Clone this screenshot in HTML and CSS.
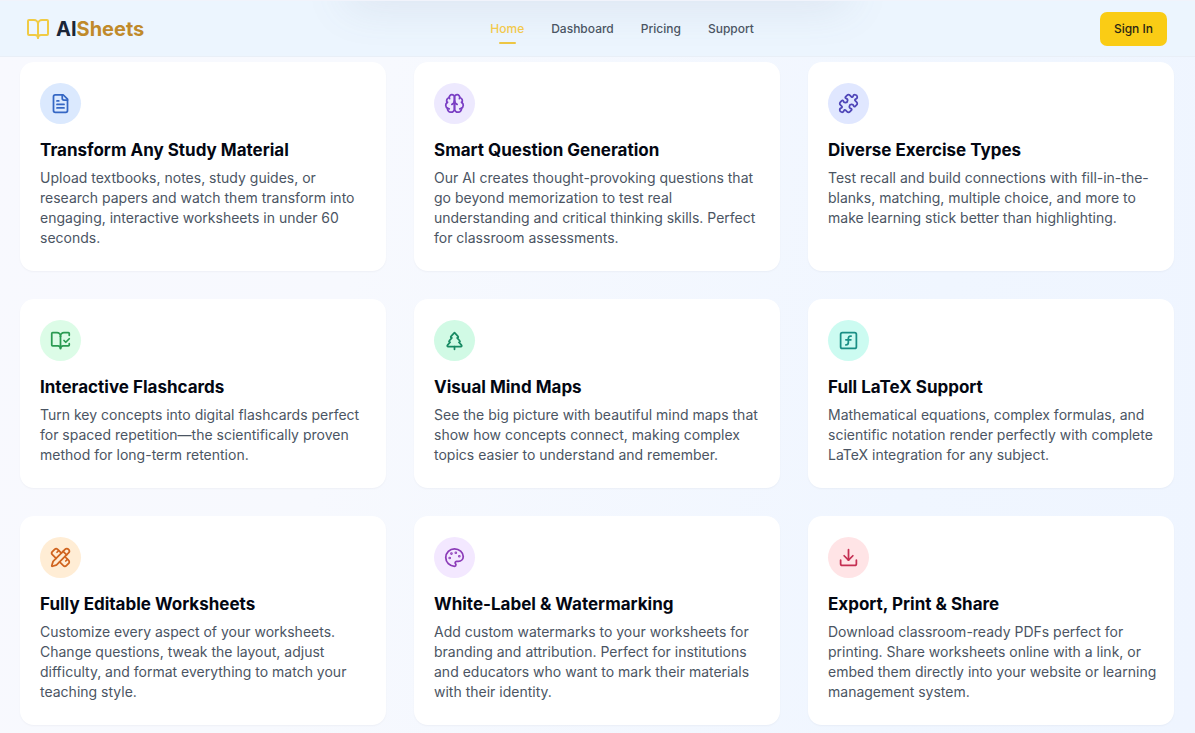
FILE: index.html
```html
<!DOCTYPE html>
<html lang="en">
<head>
<meta charset="utf-8">
<meta name="viewport" content="width=device-width, initial-scale=1">
<title>AISheets</title>
<link rel="stylesheet" href="styles.css">
</head>
<body>
<header class="header">
  <a class="brand" href="#">
    <svg class="brand-icon" viewBox="0 0 24 24" aria-hidden="true"><path d="M12 7v14"/><path d="M3 18a1 1 0 0 1-1-1V4a1 1 0 0 1 1-1h5a4 4 0 0 1 4 4 4 4 0 0 1 4-4h5a1 1 0 0 1 1 1v13a1 1 0 0 1-1 1h-6a3 3 0 0 0-3 3 3 3 0 0 0-3-3z"/></svg>
    <span>AI<span class="brand-accent">Sheets</span></span>
  </a>
  <nav class="nav">
    <a class="nav-link nav-link-active" href="#">Home</a>
    <a class="nav-link" href="#">Dashboard</a>
    <a class="nav-link" href="#">Pricing</a>
    <a class="nav-link" href="#">Support</a>
  </nav>
  <button class="sign-in" type="button">Sign In</button>
</header>
<main class="features">
  <article class="card">
    <div class="badge blue"><svg viewBox="0 0 24 24" aria-hidden="true"><path d="M15 2H6a2 2 0 0 0-2 2v16a2 2 0 0 0 2 2h12a2 2 0 0 0 2-2V7Z"/><path d="M14 2v4a2 2 0 0 0 2 2h4"/><path d="M10 9H8"/><path d="M16 13H8"/><path d="M16 17H8"/></svg></div>
    <h3 class="card-title">Transform Any Study Material</h3>
    <p class="card-text">Upload textbooks, notes, study guides, or research papers and watch them transform into engaging, interactive worksheets in under 60 seconds.</p>
  </article>
  <article class="card">
    <div class="badge violet"><svg viewBox="0 0 24 24" aria-hidden="true"><path d="M12 5a3 3 0 1 0-5.997.125 4 4 0 0 0-2.526 5.77 4 4 0 0 0 .556 6.588A4 4 0 1 0 12 18Z"/><path d="M12 5a3 3 0 1 1 5.997.125 4 4 0 0 1 2.526 5.77 4 4 0 0 1-.556 6.588A4 4 0 1 1 12 18Z"/><path d="M15 13a4.5 4.5 0 0 1-3-4 4.5 4.5 0 0 1-3 4"/><path d="M17.599 6.5a3 3 0 0 0 .399-1.375"/><path d="M6.003 5.125A3 3 0 0 0 6.401 6.5"/><path d="M3.477 10.896a4 4 0 0 1 .585-.396"/><path d="M19.938 10.5a4 4 0 0 1 .585.396"/><path d="M6 18a4 4 0 0 1-1.967-.516"/><path d="M19.967 17.484A4 4 0 0 1 18 18"/></svg></div>
    <h3 class="card-title">Smart Question Generation</h3>
    <p class="card-text">Our AI creates thought-provoking questions that go beyond memorization to test real understanding and critical thinking skills. Perfect for classroom assessments.</p>
  </article>
  <article class="card">
    <div class="badge indigo"><svg viewBox="0 0 24 24" aria-hidden="true"><path d="M15.39 4.39a1 1 0 0 0 1.68-.474 2.5 2.5 0 1 1 3.014 3.015 1 1 0 0 0-.474 1.68l1.683 1.682a2.414 2.414 0 0 1 0 3.414L19.61 15.39a1 1 0 0 1-1.68-.474 2.5 2.5 0 1 0-3.014 3.015 1 1 0 0 1 .474 1.68l-1.683 1.682a2.414 2.414 0 0 1-3.414 0L8.61 19.61a1 1 0 0 0-1.68.474 2.5 2.5 0 1 1-3.014-3.015 1 1 0 0 0 .474-1.68l-1.683-1.682a2.414 2.414 0 0 1 0-3.414L4.39 8.61a1 1 0 0 1 1.68.474 2.5 2.5 0 1 0 3.014-3.015 1 1 0 0 1-.474-1.68l1.683-1.682a2.414 2.414 0 0 1 3.414 0z"/></svg></div>
    <h3 class="card-title">Diverse Exercise Types</h3>
    <p class="card-text">Test recall and build connections with fill-in-the-blanks, matching, multiple choice, and more to make learning stick better than highlighting.</p>
  </article>
  <article class="card">
    <div class="badge green"><svg viewBox="0 0 24 24" aria-hidden="true"><path d="M12 21V7"/><path d="m16 12 2 2 4-4"/><path d="M22 6V4a1 1 0 0 0-1-1h-5a4 4 0 0 0-4 4 4 4 0 0 0-4-4H3a1 1 0 0 0-1 1v13a1 1 0 0 0 1 1h6a3 3 0 0 1 3 3 3 3 0 0 1 3-3h6a1 1 0 0 0 1-1v-1.3"/></svg></div>
    <h3 class="card-title">Interactive Flashcards</h3>
    <p class="card-text">Turn key concepts into digital flashcards perfect for spaced repetition—the scientifically proven method for long-term retention.</p>
  </article>
  <article class="card">
    <div class="badge emerald"><svg viewBox="0 0 24 24" aria-hidden="true"><path d="m17 14 3 3.3a1 1 0 0 1-.7 1.7H4.7a1 1 0 0 1-.7-1.7L7 14h-.3a1 1 0 0 1-.7-1.7L9 9h-.2A1 1 0 0 1 8 7.3L12 3l4 4.3a1 1 0 0 1-.8 1.7H15l3 3.3a1 1 0 0 1-.7 1.7H17Z"/><path d="M12 22v-3"/></svg></div>
    <h3 class="card-title">Visual Mind Maps</h3>
    <p class="card-text">See the big picture with beautiful mind maps that show how concepts connect, making complex topics easier to understand and remember.</p>
  </article>
  <article class="card">
    <div class="badge teal"><svg viewBox="0 0 24 24" aria-hidden="true"><rect width="18" height="18" x="3" y="3" rx="2"/><path d="M9 17c2 0 2.8-1 2.8-2.8V10c0-2 1-3.3 3.2-3"/><path d="M9 11.2h5.7"/></svg></div>
    <h3 class="card-title">Full LaTeX Support</h3>
    <p class="card-text">Mathematical equations, complex formulas, and scientific notation render perfectly with complete LaTeX integration for any subject.</p>
  </article>
  <article class="card">
    <div class="badge orange"><svg viewBox="0 0 24 24" aria-hidden="true"><path d="M13 7 8.7 2.7a2.41 2.41 0 0 0-3.4 0L2.7 5.3a2.41 2.41 0 0 0 0 3.4L7 13"/><path d="m8 6 2-2"/><path d="m18 16 2-2"/><path d="m17 11 4.3 4.3c.94.94.94 2.46 0 3.4l-2.6 2.6c-.94.94-2.46.94-3.4 0L11 17"/><path d="M21.174 6.812a1 1 0 0 0-3.986-3.987L3.842 16.174a2 2 0 0 0-.5.83l-1.321 4.352a.5.5 0 0 0 .623.622l4.353-1.32a2 2 0 0 0 .83-.497z"/><path d="m15 5 4 4"/></svg></div>
    <h3 class="card-title">Fully Editable Worksheets</h3>
    <p class="card-text">Customize every aspect of your worksheets. Change questions, tweak the layout, adjust difficulty, and format everything to match your teaching style.</p>
  </article>
  <article class="card">
    <div class="badge purple"><svg viewBox="0 0 24 24" aria-hidden="true"><circle class="dot" cx="13.5" cy="6.5" r=".5"/><circle class="dot" cx="17.5" cy="10.5" r=".5"/><circle class="dot" cx="8.5" cy="7.5" r=".5"/><circle class="dot" cx="6.5" cy="12.5" r=".5"/><path d="M12 2C6.5 2 2 6.5 2 12s4.5 10 10 10c.926 0 1.648-.746 1.648-1.688 0-.437-.18-.835-.437-1.125-.29-.289-.438-.652-.438-1.125a1.64 1.64 0 0 1 1.668-1.668h1.996c3.051 0 5.555-2.503 5.555-5.554C21.965 6.012 17.461 2 12 2z"/></svg></div>
    <h3 class="card-title">White-Label &amp; Watermarking</h3>
    <p class="card-text">Add custom watermarks to your worksheets for branding and attribution. Perfect for institutions and educators who want to mark their materials with their identity.</p>
  </article>
  <article class="card">
    <div class="badge rose"><svg viewBox="0 0 24 24" aria-hidden="true"><path d="M21 15v4a2 2 0 0 1-2 2H5a2 2 0 0 1-2-2v-4"/><path d="m7 10 5 5 5-5"/><path d="M12 15V3"/></svg></div>
    <h3 class="card-title">Export, Print &amp; Share</h3>
    <p class="card-text">Download classroom-ready PDFs perfect for printing. Share worksheets online with a link, or embed them directly into your website or learning management system.</p>
  </article>
</main>
</body>
</html>
```
FILE: styles.css
```css
* { box-sizing: border-box; }

body {
  margin: 0;
  min-height: 100vh;
  font-family: Inter, "Liberation Sans", sans-serif;
  color: #030712;
  background: linear-gradient(100deg, #f8f9fe 0%, #f7f9fe 30%, #f0f6ff 75%, #eff5ff 100%);
}

a { color: inherit; text-decoration: none; }

svg {
  fill: none;
  stroke: currentColor;
  stroke-width: 2;
  stroke-linecap: round;
  stroke-linejoin: round;
}

.header {
  position: relative;
  display: flex;
  align-items: center;
  justify-content: space-between;
  height: 57px;
  padding: 0 28px 0 26px;
  overflow: hidden;
  background: #ecf5fe;
  border-top: 1px solid #f1f3fb;
  border-bottom: 1px solid #e9eff7;
}

.header::before {
  content: "";
  position: absolute;
  top: -30px;
  left: 29%;
  right: 29%;
  height: 30px;
  box-shadow: 0 4px 44px rgba(100, 116, 139, 0.15);
}

.brand {
  display: flex;
  align-items: center;
  gap: 6px;
  font-size: 20px;
  font-weight: 700;
  line-height: 28px;
  color: #1b2638;
}

.brand-icon { width: 24px; height: 24px; color: #f0cb45; }
.brand-accent { color: #c08a2a; }

.nav { display: flex; gap: 27px; }

.nav-link {
  position: relative;
  font-size: 12px;
  font-weight: 500;
  line-height: 20px;
  color: #4b5563;
}

.nav-link-active { color: #f2c94c; }

.nav-link-active::after {
  content: "";
  position: absolute;
  bottom: -5px;
  left: 25%;
  width: 50%;
  height: 2px;
  border-radius: 1px;
  background: #edc643;
}

.sign-in {
  height: 34px;
  padding: 0 14px;
  border: 0;
  border-radius: 7px;
  background: #facc15;
  color: #2a2614;
  font: 500 12px/20px Inter, "Liberation Sans", sans-serif;
}

.features {
  display: grid;
  grid-template-columns: repeat(3, 1fr);
  gap: 28px;
  padding: 5px 21px 8px 20px;
}

.card {
  padding: 21px 12px 23px 20px;
  border-radius: 14px;
  background: #fff;
  box-shadow: 0 1px 2px rgba(15, 23, 42, 0.04);
}

.badge {
  display: flex;
  align-items: center;
  justify-content: center;
  width: 41px;
  height: 41px;
  margin-bottom: 14px;
  border-radius: 50%;
}

.badge svg { width: 21px; height: 21px; }
.dot { fill: currentColor; }

.blue { background: #dbe9fe; color: #3567c4; }
.violet { background: #ede9fe; color: #7a3fc4; }
.indigo { background: #e0e7ff; color: #4f46b8; }
.green { background: #dcfce7; color: #2a9a52; }
.emerald { background: #d1fae5; color: #188a63; }
.teal { background: #ccfbf1; color: #1a8f85; }
.orange { background: #ffedd5; color: #d0641f; }
.purple { background: #f3e8ff; color: #8b3bb8; }
.rose { background: #ffe4e6; color: #c52f52; }

.card-title {
  margin: 0 0 6px;
  font-size: 17px;
  font-weight: 700;
  line-height: 24px;
}

.card-text {
  margin: 0;
  font-size: 14px;
  line-height: 20px;
  color: #4b5563;
}
```
